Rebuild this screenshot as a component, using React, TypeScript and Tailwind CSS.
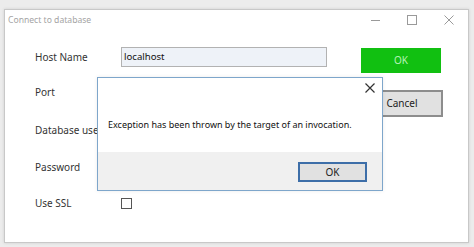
import React from 'react';

const font = { fontFamily: '"Segoe UI", "Noto Sans", "Open Sans", sans-serif' };

function Row({ label, children, className }: { label: string; children?: React.ReactNode; className?: string }) {
  return (
    <div className={`flex items-center h-[24px] ${className ?? ''}`}>
      <span className="w-[86px] text-[10px] text-[#333] whitespace-nowrap overflow-hidden">{label}</span>
      {children}
    </div>
  );
}

export default function App() {
  return (
    <div className="w-[474px] h-[247px] bg-[#ececec] pt-[9px] pl-[4px] pr-[5px] pb-[4px]" style={font}>
      <div className="relative w-full h-full bg-white border border-[#c8c8c8] shadow-[0_0_3px_rgba(0,0,0,0.12)] flex flex-col">
        {/* title bar */}
        <div className="h-[20px] flex items-center pl-[3px] shrink-0">
          <span className="text-[8.6px] text-[#a4a4a4] flex-1">Connect to database</span>
          <div className="flex items-center text-[#9a9a9a]">
            <svg width="37" height="20" viewBox="0 0 37 20" className="block">
              <line x1="14" y1="10.5" x2="23" y2="10.5" stroke="currentColor" strokeWidth="1" />
            </svg>
            <svg width="37" height="20" viewBox="0 0 37 20" className="block">
              <rect x="13.5" y="5.5" width="9" height="9" fill="none" stroke="currentColor" strokeWidth="1" />
            </svg>
            <svg width="37" height="20" viewBox="0 0 37 20" className="block">
              <path d="M13.5 5.5 L22.5 14.5 M22.5 5.5 L13.5 14.5" stroke="currentColor" strokeWidth="1" />
            </svg>
          </div>
        </div>

        {/* form */}
        <div className="flex flex-1 pl-[30px]">
          <div className="flex flex-col pt-[15px]">
            <Row label="Host Name">
              <div className="w-[206px] h-[20px] bg-[#eef2f8] border border-[#b2b2b2] flex items-center px-[2px] text-[9.6px] text-[#111]">
                localhost
              </div>
            </Row>
            <Row label="Port" className="mt-[11px]" />
            <Row label="Database user" className="mt-[14px]" />
            <Row label="Password" className="mt-[13px]" />
            <Row label="Use SSL" className="mt-[12px]">
              <div className="w-[11px] h-[11px] border border-[#555] bg-white" />
            </Row>
          </div>
          <div className="flex flex-col pt-[18px] ml-[34px]">
            <button className="w-[80px] h-[25px] bg-[#11c011] text-[#b6f2b6] text-[10px] flex items-center justify-center">
              OK
            </button>
            <button className="mt-[17px] w-[82px] h-[27px] bg-[#e1e1e1] border-2 border-[#8d8d8d] text-[10px] text-[#222] flex items-center justify-center">
              Cancel
            </button>
          </div>
        </div>

        {/* message box */}
        <div className="absolute left-[92px] top-[67px] w-[286px] h-[114px] bg-white border border-[#7ea6cb] flex flex-col shadow-[0_0_4px_rgba(0,0,0,0.08)]">
          <div className="flex-1 relative">
            <svg width="12" height="12" viewBox="0 0 12 12" className="absolute right-[6px] top-[4px] text-[#333]">
              <path d="M1.5 1.5 L10.5 10.5 M10.5 1.5 L1.5 10.5" stroke="currentColor" strokeWidth="1.2" />
            </svg>
            <p className="absolute left-[10px] top-[40px] text-[9px] text-[#111] whitespace-nowrap">
              Exception has been thrown by the target of an invocation.
            </p>
          </div>
          <div className="h-[38px] bg-[#f0f0f0] flex justify-end items-start pt-[10px] pr-[15px]">
            <button className="w-[69px] h-[20px] bg-[#e1e1e1] border-2 border-[#3d6ea8] text-[10px] text-[#222] flex items-center justify-center">
              OK
            </button>
          </div>
        </div>
      </div>
    </div>
  );
}
